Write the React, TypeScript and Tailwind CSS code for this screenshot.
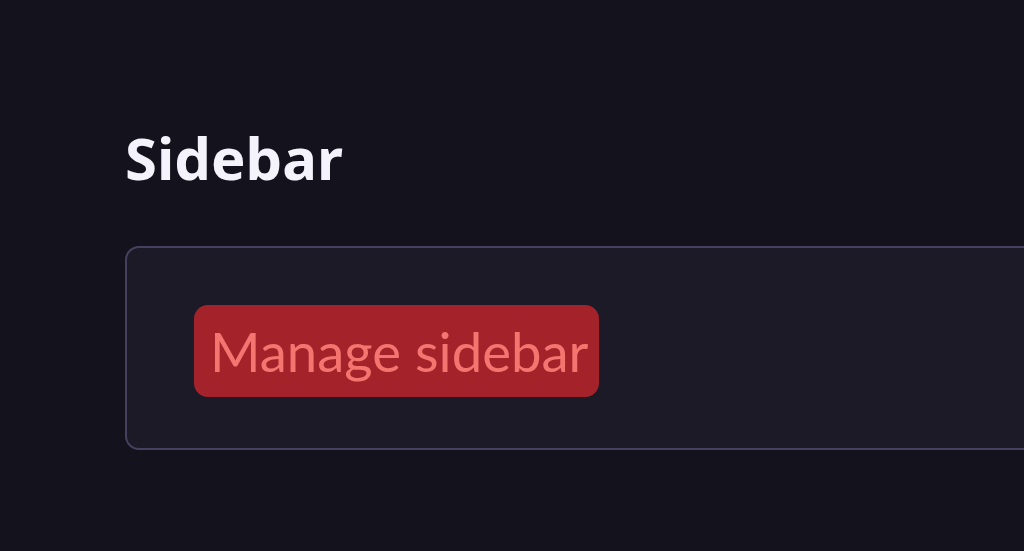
import React from 'react';

function SidebarSettings() {
    return (
        <div className="pl-[125px] pt-[122px]">
            <h2 className="text-[58px] leading-[72px] font-bold text-[#f4f2fa]" style={{ fontFamily: '"Noto Sans", sans-serif' }}>Sidebar</h2>
            <div className="mt-[52px] w-[960px] h-[204px] rounded-[14px] border-2 border-[#45405e] bg-[#1c1a26] pl-[67px] pt-[57px]">
                <button className="w-[405px] h-[92px] rounded-[14px] bg-[#a4232b] text-[#f47470] text-[54.5px] leading-[86px] text-left pl-[16px] whitespace-nowrap" style={{ fontFamily: 'Lato, "Noto Sans", sans-serif' }}>
                    Manage sidebar
                </button>
            </div>
        </div>
    );
}

export default function App() {
    return (
        <div className="w-[1024px] h-[551px] overflow-hidden bg-[#14121c]">
            <SidebarSettings />
        </div>
    );
}
